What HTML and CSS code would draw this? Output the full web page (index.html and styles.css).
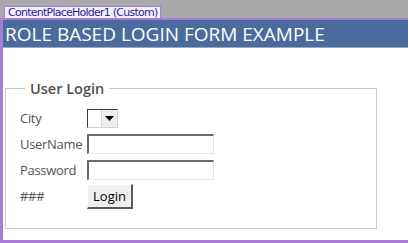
FILE: index.html
```html
<!DOCTYPE html>
<html>
<head>
<meta charset="utf-8">
<link rel="stylesheet" href="styles.css">
</head>
<body>
<div class="top">
  <div class="tab">ContentPlaceHolder1 (Custom)</div>
</div>
<div class="frame">
  <div class="header">ROLE BASED LOGIN FORM EXAMPLE</div>
  <div class="content">
    <fieldset class="box">
      <legend class="legend">User Login</legend>
      <div class="grid">
        <div class="label">City</div>
        <div class="cell"><span class="select"><span class="sel-val"></span><span class="sel-btn"><svg width="9" height="5" viewBox="0 0 9 5"><path d="M0 0h9L4.5 5z" fill="#000"/></svg></span></span></div>
        <div class="label">UserName</div>
        <div class="cell"><span class="input"></span></div>
        <div class="label">Password</div>
        <div class="cell"><span class="input"></span></div>
        <div class="label">###</div>
        <div class="cell"><span class="button">Login</span></div>
      </div>
    </fieldset>
  </div>
</div>
</body>
</html>
```
FILE: styles.css
```css
html, body { margin: 0; padding: 0; }
body {
  width: 408px;
  height: 243px;
  overflow: hidden;
  background: #ffffff;
  font-family: "Open Sans", "DejaVu Sans", sans-serif;
}
.top {
  height: 18px;
  background: #a9a8ab;
  display: flex;
  align-items: flex-end;
  padding-left: 4px;
  border-bottom: 2px solid #a77bd8;
}
.tab {
  height: 11px;
  line-height: 11px;
  background: #f3effb;
  border: 1px solid #a77bd8;
  border-bottom: none;
  padding: 0 2px 0 3px;
  font-family: "DejaVu Sans", sans-serif;
  font-size: 11px;
  letter-spacing: -0.75px;
  color: #2a1fa0;
}
.frame {
  height: 220px;
  border-left: 3px solid #a77bd8;
  border-bottom: 3px solid #a77bd8;
  display: flex;
  flex-direction: column;
}
.header {
  height: 27px;
  background: #4a6b9d;
  color: #ffffff;
  font-size: 19px;
  line-height: 28px;
  padding-left: 2px;
  border-bottom: 1px solid #9aa7bc;
}
.content {
  padding: 31px 0 0 2px;
}
.box {
  margin: 0;
  width: 372px;
  height: 150px;
  box-sizing: border-box;
  border: 1px solid #c9c9c9;
  padding: 7px 0 0 14px;
}
.legend {
  padding: 0 5px;
  margin-left: 5px;
  font-size: 14.5px;
  font-weight: 600;
  color: #505050;
}
.grid {
  display: grid;
  grid-template-columns: 67px auto;
  grid-auto-rows: 26px;
  align-items: center;
}
.label {
  font-size: 13px;
  letter-spacing: -0.3px;
  color: #555555;
}
.cell { display: flex; align-items: center; }
.select {
  display: flex;
  width: 31px;
  height: 19px;
  box-sizing: border-box;
  border: 1px solid #3c3c3c;
  border-right-color: #d0d0d0;
  border-bottom-color: #d0d0d0;
  background: #fff;
}
.sel-val { flex: 1; }
.sel-btn {
  width: 15px;
  display: flex;
  align-items: center;
  justify-content: center;
  background: #ededed;
  border-left: 1px solid #d8d8d8;
}
.input {
  display: block;
  width: 127px;
  height: 20px;
  box-sizing: border-box;
  border: 1px solid #e6e6e6;
  border-top: 2px solid #6a6a6a;
  border-left: 2px solid #6a6a6a;
  background: #fff;
}
.button {
  display: flex;
  align-items: center;
  justify-content: center;
  width: 46px;
  height: 25px;
  box-sizing: border-box;
  background: #efefef;
  border: 1px solid #fff;
  border-right: 2px solid #5a5a5a;
  border-bottom: 2px solid #5a5a5a;
  font-size: 13px;
  color: #000;
}
```
